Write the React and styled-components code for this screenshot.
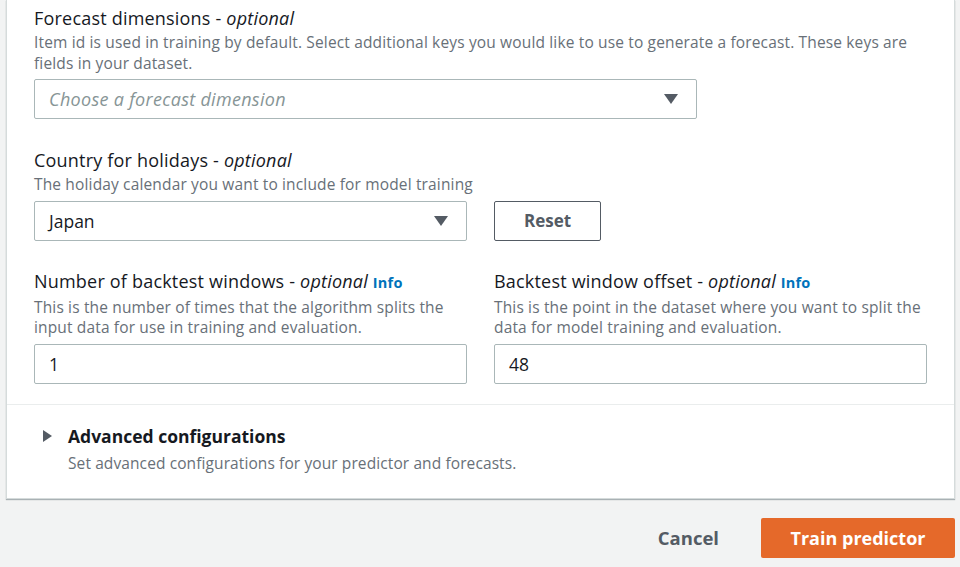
import React from 'react';
import styled, { createGlobalStyle } from 'styled-components';

const GlobalStyle = createGlobalStyle`
  html, body {
    margin: 0;
    padding: 0;
    background: #f2f3f3;
    font-family: "Open Sans", "Noto Sans", Arial, sans-serif;
    color: #16191f;
  }
`;

function ArrowDown() {
  return (
    <svg width="14" height="10" viewBox="0 0 14 10">
      <path d="M0 0 H14 L7 10 Z" fill="#545b64" />
    </svg>
  );
}

function ArrowRight() {
  return (
    <svg width="9" height="12" viewBox="0 0 9 12">
      <path d="M0 0 L9 6 L0 12 Z" fill="#545b64" />
    </svg>
  );
}

function App() {
  return (
    <Page>
      <GlobalStyle />
      <Panel>
        <Body>
          <Field>
            <Label>
              Forecast dimensions - <em>optional</em>
            </Label>
            <Description>
              Item id is used in training by default. Select additional keys you would like to use
              to generate a forecast. These keys are fields in your dataset.
            </Description>
            <Select width="663px">
              <Placeholder>Choose a forecast dimension</Placeholder>
              <ArrowDown />
            </Select>
          </Field>

          <Field>
            <Label>
              Country for holidays - <em>optional</em>
            </Label>
            <Description>The holiday calendar you want to include for model training</Description>
            <Row>
              <Select width="433px">
                <Value>Japan</Value>
                <ArrowDown />
              </Select>
              <Button>Reset</Button>
            </Row>
          </Field>

          <Columns>
            <Field>
              <Label>
                Number of backtest windows - <em>optional</em> <Info>Info</Info>
              </Label>
              <Description>
                This is the number of times that the algorithm splits the input data for use in
                training and evaluation.
              </Description>
              <Input>1</Input>
            </Field>
            <Field>
              <Label>
                Backtest window offset - <em>optional</em> <Info>Info</Info>
              </Label>
              <Description>
                This is the point in the dataset where you want to split the data for model
                training and evaluation.
              </Description>
              <Input>48</Input>
            </Field>
          </Columns>
        </Body>

        <Expandable>
          <ExpandHeader>
            <ArrowRight />
            <ExpandTitle>Advanced configurations</ExpandTitle>
          </ExpandHeader>
          <ExpandText>Set advanced configurations for your predictor and forecasts.</ExpandText>
        </Expandable>
      </Panel>

      <Footer>
        <LinkButton>Cancel</LinkButton>
        <PrimaryButton>Train predictor</PrimaryButton>
      </Footer>
    </Page>
  );
}

export default App;

const Page = styled.div`
  width: 960px;
  height: 567px;
  overflow: hidden;
  padding: 0 5px 0 6px;
  box-sizing: border-box;
`;

const Panel = styled.div`
  background: #fff;
  border: 1px solid #d5dbdb;
  border-top: none;
  box-shadow: 0 1px 1px 0 rgba(0, 28, 36, 0.3);
`;

const Body = styled.div`
  padding: 7px 27px 20px;
  display: flex;
  flex-direction: column;
  gap: 30px;
  border-bottom: 1px solid #eaeded;
`;

const Field = styled.div`
  display: flex;
  flex-direction: column;
`;

const Label = styled.div`
  font-size: 18px;
  line-height: 22px;
  letter-spacing: 0.2px;
  color: #16191f;

  em {
    font-style: italic;
  }
`;

const Info = styled.span`
  font-size: 14.5px;
  font-weight: 700;
  color: #0073bb;
`;

const Description = styled.div`
  margin-top: 3px;
  font-size: 15.5px;
  line-height: 20.5px;
  letter-spacing: 0.15px;
  color: #687078;
`;

const Row = styled.div`
  display: flex;
  gap: 27px;
  margin-top: 6px;
`;

const Columns = styled.div`
  display: grid;
  grid-template-columns: 1fr 1fr;
  column-gap: 27px;
  margin-top: -1px;
`;

const Select = styled.div`
  width: ${(p) => p.width};
  height: 40px;
  box-sizing: border-box;
  margin-top: 6px;
  display: flex;
  align-items: center;
  justify-content: space-between;
  padding: 0 18px 0 14px;
  border: 1px solid #aab7b8;
  border-radius: 2px;
  background: #fff;

  ${Row} & {
    margin-top: 0;
  }
`;

const Placeholder = styled.span`
  font-size: 18px;
  font-style: italic;
  letter-spacing: 0.3px;
  color: #879596;
`;

const Value = styled.span`
  font-size: 17.5px;
  color: #16191f;
`;

const Input = styled.div`
  height: 40px;
  box-sizing: border-box;
  margin-top: 6px;
  display: flex;
  align-items: center;
  padding: 0 14px;
  border: 1px solid #aab7b8;
  border-radius: 2px;
  font-size: 17.5px;
  color: #16191f;
`;

const Button = styled.button`
  width: 107px;
  height: 40px;
  border: 1px solid #545b64;
  border-radius: 2px;
  background: #fff;
  color: #545b64;
  font-family: inherit;
  font-size: 17px;
  font-weight: 700;
  cursor: pointer;
`;

const Expandable = styled.div`
  padding: 20px 27px 25px 36px;
`;

const ExpandHeader = styled.div`
  display: flex;
  align-items: center;
  gap: 16px;
`;

const ExpandTitle = styled.span`
  font-size: 17.5px;
  line-height: 22px;
  font-weight: 700;
  color: #16191f;
`;

const ExpandText = styled.div`
  margin-top: 6px;
  padding-left: 25px;
  font-size: 15.5px;
  line-height: 20px;
  letter-spacing: 0.1px;
  color: #687078;
`;

const Footer = styled.div`
  display: flex;
  justify-content: flex-end;
  align-items: center;
  gap: 42px;
  margin-top: 19px;
`;

const LinkButton = styled.button`
  border: none;
  background: none;
  padding: 0;
  font-family: inherit;
  font-size: 18.5px;
  font-weight: 700;
  color: #545b64;
  cursor: pointer;
`;

const PrimaryButton = styled.button`
  width: 194px;
  height: 40px;
  border: none;
  border-radius: 2px;
  background: #e5692a;
  color: #fff;
  font-family: inherit;
  font-size: 18px;
  font-weight: 700;
  cursor: pointer;
`;
